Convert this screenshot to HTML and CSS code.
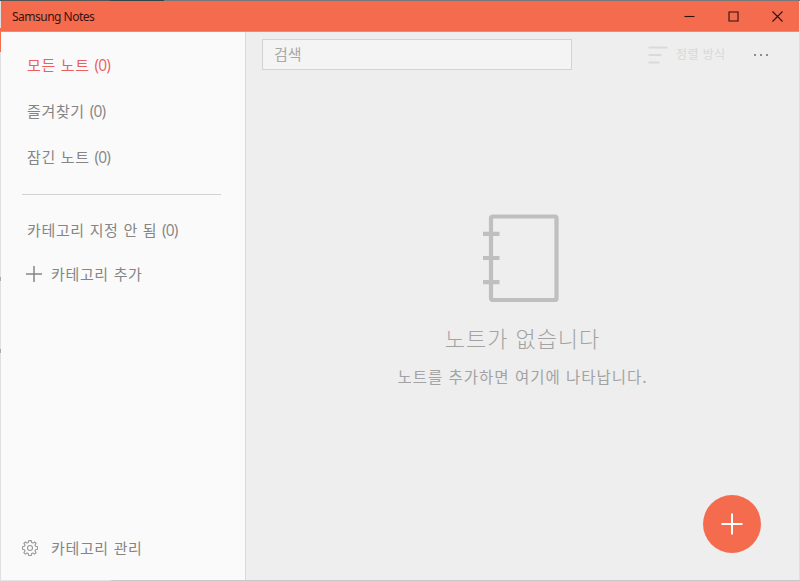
FILE: index.html
```html
<!DOCTYPE html>
<html lang="ko">
<head>
<meta charset="utf-8">
<title>Samsung Notes</title>
<link rel="stylesheet" href="styles.css">
</head>
<body>
<div class="desktop">
  <div class="app">
    <header class="titlebar">
      <span class="title">Samsung Notes</span>
      <div class="controls">
        <svg width="11" height="11" viewBox="0 0 11 11"><path d="M0.5 5.5h10"/></svg>
        <svg width="11" height="11" viewBox="0 0 11 11"><path d="M1 1h9v9H1z"/></svg>
        <svg width="11" height="11" viewBox="0 0 11 11"><path d="M.5.5l10 10M10.5.5l-10 10"/></svg>
      </div>
    </header>
    <div class="body">
      <nav class="sidebar">
        <a class="item active">모든 노트 <span class="num">(0)</span></a>
        <a class="item">즐겨찾기 <span class="num">(0)</span></a>
        <a class="item">잠긴 노트 <span class="num">(0)</span></a>
        <hr class="divider">
        <a class="item uncategorized">카테고리 지정 안 됨 <span class="num">(0)</span></a>
        <a class="item with-icon add">
          <svg width="16" height="16" viewBox="0 0 16 16"><path d="M0 8h16M8 0v16" stroke="#858585" stroke-width="1.5"/></svg>
          <span>카테고리 추가</span>
        </a>
        <a class="item with-icon manage">
          <svg width="16" height="16" viewBox="0 0 16 16" fill="none" stroke="#999" stroke-width="1.1" stroke-linejoin="round"><path d="M6.7.6h2.6l.4 2 1.3.5L12.6 2l1.5 1.5L13 5l.5 1.3 2 .4v2.6l-2 .4L13 11l1.1 1.6-1.5 1.5L11 13l-1.3.5-.4 2H6.700l-.4-2L5 13l-1.600 1.100L1.900 12.600 3 11l-.5-1.300-2-.4V6.700l2-.4L3 5 1.900 3.500 3.400 2 5 3.100l1.300-.5z"/><circle cx="8" cy="8" r="2.500"/></svg>
          <span>카테고리 관리</span>
        </a>
      </nav>
      <main class="content">
        <div class="toolbar">
          <div class="search">검색</div>
          <div class="sort">
            <svg width="20" height="18" viewBox="0 0 20 18" stroke="#dadada" stroke-width="2"><path d="M.5 1.500h19M.5 9h13M.5 16.500h11"/></svg>
            <span>정렬 방식</span>
          </div>
          <div class="more"><i></i><i></i><i></i></div>
        </div>
        <section class="empty">
          <svg class="notebook" width="76" height="88" viewBox="0 0 76 88" fill="none" stroke="#bfbfbf" stroke-width="4.200"><rect x="8" y="2.500" width="65.500" height="83.500" rx="1.500"/><path d="M0 19.800h16.500M0 44h16.500M0 68.200h16.500"/></svg>
          <h1>노트가 없습니다</h1>
          <p>노트를 추가하면 여기에 나타납니다.</p>
        </section>
        <button class="fab" aria-label="노트 추가">
          <svg width="22" height="22" viewBox="0 0 22 22"><path d="M.5 11h21M11 .5v21" stroke="#fff" stroke-width="2"/></svg>
        </button>
      </main>
    </div>
  </div>
</div>
</body>
</html>
```
FILE: styles.css
```css
* { box-sizing: border-box; }

body {
  margin: 0;
  font-family: "Noto Sans CJK KR", sans-serif;
  color: #858585;
}

.desktop {
  height: 581px;
  padding: 1px;
  background:
    linear-gradient(90deg, #555 0 110px, #30444a 110px 164px, #787878 164px) 0 0 / 100% 1px no-repeat,
    linear-gradient(#f46c4e, #f46c4e) 0 28px / 1px 24px no-repeat,
    linear-gradient(#aaa, #aaa) 0 277px / 1px 4px no-repeat,
    linear-gradient(#aaa, #aaa) 0 349px / 1px 4px no-repeat,
    linear-gradient(90deg, #e4e4e4 0 108px, #c8c8c8 114px) 0 100% / 100% 1px no-repeat,
    #e0e0e0;
}

.app {
  display: flex;
  flex-direction: column;
  height: 579px;
}

.titlebar {
  display: flex;
  justify-content: space-between;
  align-items: center;
  height: 31px;
  padding: 0 16px 0 11px;
  background: #f56b4e;
  border-bottom: 1px solid #f28a72;
}

.title {
  padding-top: 1px;
  color: #351510;
  font: 12px/16px "Noto Sans", sans-serif;
  letter-spacing: -0.5px;
}

.controls {
  display: flex;
  gap: 33px;
}

.controls svg {
  fill: none;
  stroke: #2b120d;
  stroke-width: 1.1;
}

.body {
  display: flex;
  flex: 1;
}

.sidebar {
  display: flex;
  flex-direction: column;
  width: 245px;
  padding: 10px 24px 9px 21px;
  background: #fafafa;
  border-right: 1px solid #d9d9d9;
}

.item {
  height: 46px;
  padding-left: 5px;
  font-size: 15px;
  line-height: 46px;
  letter-spacing: 0.65px;
  white-space: nowrap;
}

.active { color: #ed5f5f; }

.num {
  font-family: "Open Sans", sans-serif;
  font-size: 15.5px;
  letter-spacing: -0.8px;
}

.divider {
  width: 199px;
  height: 1px;
  margin: 14px 0 12px;
  border: 0;
  background: #d2d2d2;
}

.uncategorized { height: 44px; }

.with-icon {
  display: flex;
  align-items: center;
  gap: 9px;
  padding-left: 4px;
}

.manage {
  margin-top: auto;
  padding-left: 0;
  gap: 13px;
}

.content {
  position: relative;
  flex: 1;
  background: #eee;
}

.toolbar {
  display: flex;
  align-items: center;
  padding: 7px 31px 0 16px;
}

.search {
  width: 310px;
  height: 31px;
  padding-left: 11px;
  border: 1px solid #d3d3d3;
  background: #f4f4f4;
  color: #a8a8a8;
  font-size: 15px;
  line-height: 27px;
}

.sort {
  display: flex;
  align-items: center;
  gap: 8px;
  margin-left: 76px;
  color: #d8d8d8;
  font-size: 12px;
  line-height: 18px;
  letter-spacing: 0.4px;
}

.sort span { margin-top: -2px; }

.more {
  display: flex;
  gap: 4px;
  margin: 1px 0 0 auto;
}

.more i {
  width: 2px;
  height: 2px;
  background: #8c8c8c;
}

.empty {
  display: flex;
  flex-direction: column;
  align-items: center;
  padding-top: 144px;
  color: #a3a3a3;
}

.notebook { margin-right: 4px; }

h1 {
  margin: 18px 0 0;
  font-size: 22px;
  font-weight: 300;
  line-height: 34px;
  letter-spacing: 0.95px;
}

p {
  margin: 10px 0 0;
  font-size: 15.5px;
  line-height: 24px;
  letter-spacing: 1px;
}

.fab {
  position: absolute;
  right: 38px;
  bottom: 27px;
  display: grid;
  place-items: center;
  width: 58px;
  height: 58px;
  padding: 0;
  border: 0;
  border-radius: 50%;
  background: #f56b4e;
}
```
